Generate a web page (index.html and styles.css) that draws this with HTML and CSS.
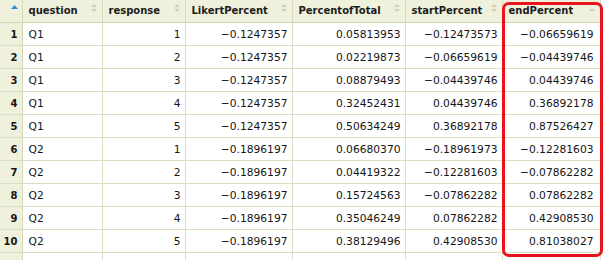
FILE: index.html
```html
<!DOCTYPE html>
<html>
<head>
<meta charset="utf-8">
<link rel="stylesheet" href="styles.css">
</head>
<body>
<div class="viewer">
<table class="grid">
<colgroup>
<col class="c-idx"><col class="c-q"><col class="c-r"><col class="c-l"><col class="c-p"><col class="c-s"><col class="c-e">
</colgroup>
<thead>
<tr>
<th class="idx-h"><svg class="asc" width="7" height="4" viewBox="0 0 7 4"><polygon points="0,4 3.5,0 7,4" fill="#2f8bd3"/></svg></th>
<th><div class="hc"><span>question</span><svg class="sort" width="6" height="8" viewBox="0 0 6 8"><polygon points="0,3 3,0 6,3" /><polygon points="0,5 3,8 6,5"/></svg></div></th>
<th><div class="hc"><span>response</span><svg class="sort" width="6" height="8" viewBox="0 0 6 8"><polygon points="0,3 3,0 6,3" /><polygon points="0,5 3,8 6,5"/></svg></div></th>
<th><div class="hc"><span>LikertPercent</span><svg class="sort" width="6" height="8" viewBox="0 0 6 8"><polygon points="0,3 3,0 6,3" /><polygon points="0,5 3,8 6,5"/></svg></div></th>
<th><div class="hc"><span>PercentofTotal</span><svg class="sort" width="6" height="8" viewBox="0 0 6 8"><polygon points="0,3 3,0 6,3" /><polygon points="0,5 3,8 6,5"/></svg></div></th>
<th><div class="hc"><span>startPercent</span><svg class="sort" width="6" height="8" viewBox="0 0 6 8"><polygon points="0,3 3,0 6,3" /><polygon points="0,5 3,8 6,5"/></svg></div></th>
<th><div class="hc"><span>endPercent</span><svg class="sort" width="6" height="8" viewBox="0 0 6 8"><polygon points="0,5 3,8 6,5"/></svg></div></th>
</tr>
</thead>
<tbody>
<tr><td class="idx">1</td><td>Q1</td><td class="n">1</td><td class="n">&minus;0.1247357</td><td class="n">0.05813953</td><td class="n">&minus;0.12473573</td><td class="n">&minus;0.06659619</td></tr>
<tr><td class="idx">2</td><td>Q1</td><td class="n">2</td><td class="n">&minus;0.1247357</td><td class="n">0.02219873</td><td class="n">&minus;0.06659619</td><td class="n">&minus;0.04439746</td></tr>
<tr><td class="idx">3</td><td>Q1</td><td class="n">3</td><td class="n">&minus;0.1247357</td><td class="n">0.08879493</td><td class="n">&minus;0.04439746</td><td class="n">0.04439746</td></tr>
<tr><td class="idx">4</td><td>Q1</td><td class="n">4</td><td class="n">&minus;0.1247357</td><td class="n">0.32452431</td><td class="n">0.04439746</td><td class="n">0.36892178</td></tr>
<tr><td class="idx">5</td><td>Q1</td><td class="n">5</td><td class="n">&minus;0.1247357</td><td class="n">0.50634249</td><td class="n">0.36892178</td><td class="n">0.87526427</td></tr>
<tr><td class="idx">6</td><td>Q2</td><td class="n">1</td><td class="n">&minus;0.1896197</td><td class="n">0.06680370</td><td class="n">&minus;0.18961973</td><td class="n">&minus;0.12281603</td></tr>
<tr><td class="idx">7</td><td>Q2</td><td class="n">2</td><td class="n">&minus;0.1896197</td><td class="n">0.04419322</td><td class="n">&minus;0.12281603</td><td class="n">&minus;0.07862282</td></tr>
<tr><td class="idx">8</td><td>Q2</td><td class="n">3</td><td class="n">&minus;0.1896197</td><td class="n">0.15724563</td><td class="n">&minus;0.07862282</td><td class="n">0.07862282</td></tr>
<tr><td class="idx">9</td><td>Q2</td><td class="n">4</td><td class="n">&minus;0.1896197</td><td class="n">0.35046249</td><td class="n">0.07862282</td><td class="n">0.42908530</td></tr>
<tr><td class="idx">10</td><td>Q2</td><td class="n">5</td><td class="n">&minus;0.1896197</td><td class="n">0.38129496</td><td class="n">0.42908530</td><td class="n">0.81038027</td></tr>
<tr><td class="idx"></td><td></td><td></td><td></td><td></td><td></td><td></td></tr>
</tbody>
</table>
<div class="highlight"></div>
</div>
</body>
</html>
```
FILE: styles.css
```css
html, body {
  margin: 0;
  padding: 0;
  background: #ffffff;
  overflow: hidden;
}
.viewer {
  position: relative;
  width: 603px;
  height: 260px;
  overflow: hidden;
  font-family: "DejaVu Sans", Verdana, sans-serif;
  color: #151515;
}
.grid {
  border-collapse: collapse;
  table-layout: fixed;
  width: 600px;
}
.c-idx { width: 22px; }
.c-q { width: 80px; }
.c-r { width: 83px; }
.c-l { width: 107px; }
.c-p { width: 113px; }
.c-s { width: 97px; }
.c-e { width: 98px; }

th {
  height: 22px;
  padding: 0;
  background: #eff1dd;
  border-right: 1px solid #d8dabb;
  border-bottom: 1px solid #d4d6b4;
  font-size: 10px;
  font-weight: bold;
  text-align: left;
  vertical-align: top;
  color: #1c1c1c;
}
.hc {
  display: flex;
  justify-content: space-between;
  align-items: flex-start;
  padding: 0 5px 0 6px;
  height: 22px;
}
.hc span {
  line-height: 22px;
  white-space: nowrap;
}
.sort {
  margin-top: 4px;
  fill: #cfd0b8;
  flex: none;
}
.idx-h {
  text-align: left;
}
.asc {
  display: block;
  margin: 5px 0 0 11px;
}
td {
  height: 22px;
  padding: 0 4px 0 6px;
  border-right: 1px solid #dcdec4;
  border-bottom: 1px solid #dcdec4;
  font-size: 10.7px;
  white-space: nowrap;
  overflow: hidden;
}
td.n {
  text-align: right;
  padding-right: 4px;
}
td:last-child.n {
  padding-right: 6px;
}
td.idx {
  background: #eff1dd;
  font-weight: bold;
  font-size: 10px;
  text-align: right;
  padding: 0 4px 0 0;
  border-right: 1px solid #d4d6b4;
  border-bottom: 1px solid #dcdec4;
}
.highlight {
  position: absolute;
  left: 502px;
  top: 2px;
  width: 95px;
  height: 249px;
  border: 3px solid #e8131c;
  border-radius: 7px;
}
```
